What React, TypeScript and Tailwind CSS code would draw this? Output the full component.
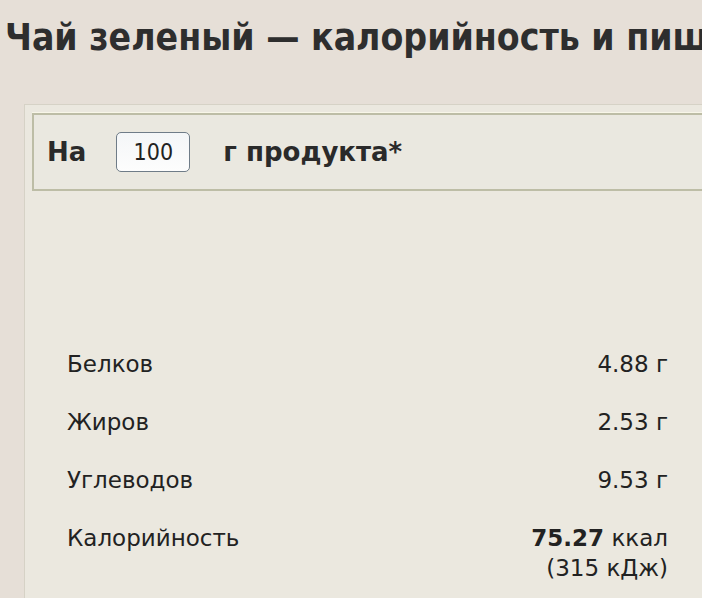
export default function App() {
  const rows = [
    { label: "Белков", value: "4.88 г" },
    { label: "Жиров", value: "2.53 г" },
    { label: "Углеводов", value: "9.53 г" },
  ];

  return (
    <div className="h-[598px] w-[702px] overflow-hidden bg-[#e6dfd7] text-[#222] [font-family:'DejaVu_Sans',Verdana,sans-serif]">
      <h1 className="whitespace-nowrap pl-[5px] pt-[14px] text-[37px] leading-[48px] font-bold text-[#2e2e2e] [font-family:'DejaVu_Sans_Condensed','DejaVu_Sans',sans-serif]">
        Чай зеленый — калорийность и пищевая ценность
      </h1>

      <div className="ml-[24px] mt-[42px] w-[720px] h-[520px] border-l border-t border-[#d6d2c6] bg-[#ebe8df] pl-[7px] pt-[7px]">
        <div className="border-t border-[#f8f6e8]">
          <div className="flex h-[78px] items-center border-2 border-[#bdbda6] bg-[#eae8e0] pl-[13px]">
            <span className="text-[26px] font-bold text-[#2a2a2a]">На</span>
            <div className="ml-[30px] flex h-[40px] w-[74px] items-center justify-center rounded-[5px] border border-[#6f7c88] bg-gradient-to-b from-[#f4f6f8] to-[#fdfdfd] text-[23px] text-[#222] [font-family:'DejaVu_Sans_Condensed','DejaVu_Sans',sans-serif]">
              100
            </div>
            <span className="ml-[33px] text-[26px] font-bold text-[#2a2a2a]">
              г продукта*
            </span>
          </div>
        </div>

        <div className="ml-[35px] mt-[158px] w-[601px] space-y-[28px] text-[23px] leading-[30px]">
          {rows.map((r) => (
            <div key={r.label} className="flex justify-between">
              <span>{r.label}</span>
              <span>{r.value}</span>
            </div>
          ))}
          <div className="flex justify-between">
            <span>Калорийность</span>
            <span className="text-right">
              <b className="font-bold">75.27</b> ккал
              <br />
              (315 кДж)
            </span>
          </div>
        </div>
      </div>
    </div>
  );
}
